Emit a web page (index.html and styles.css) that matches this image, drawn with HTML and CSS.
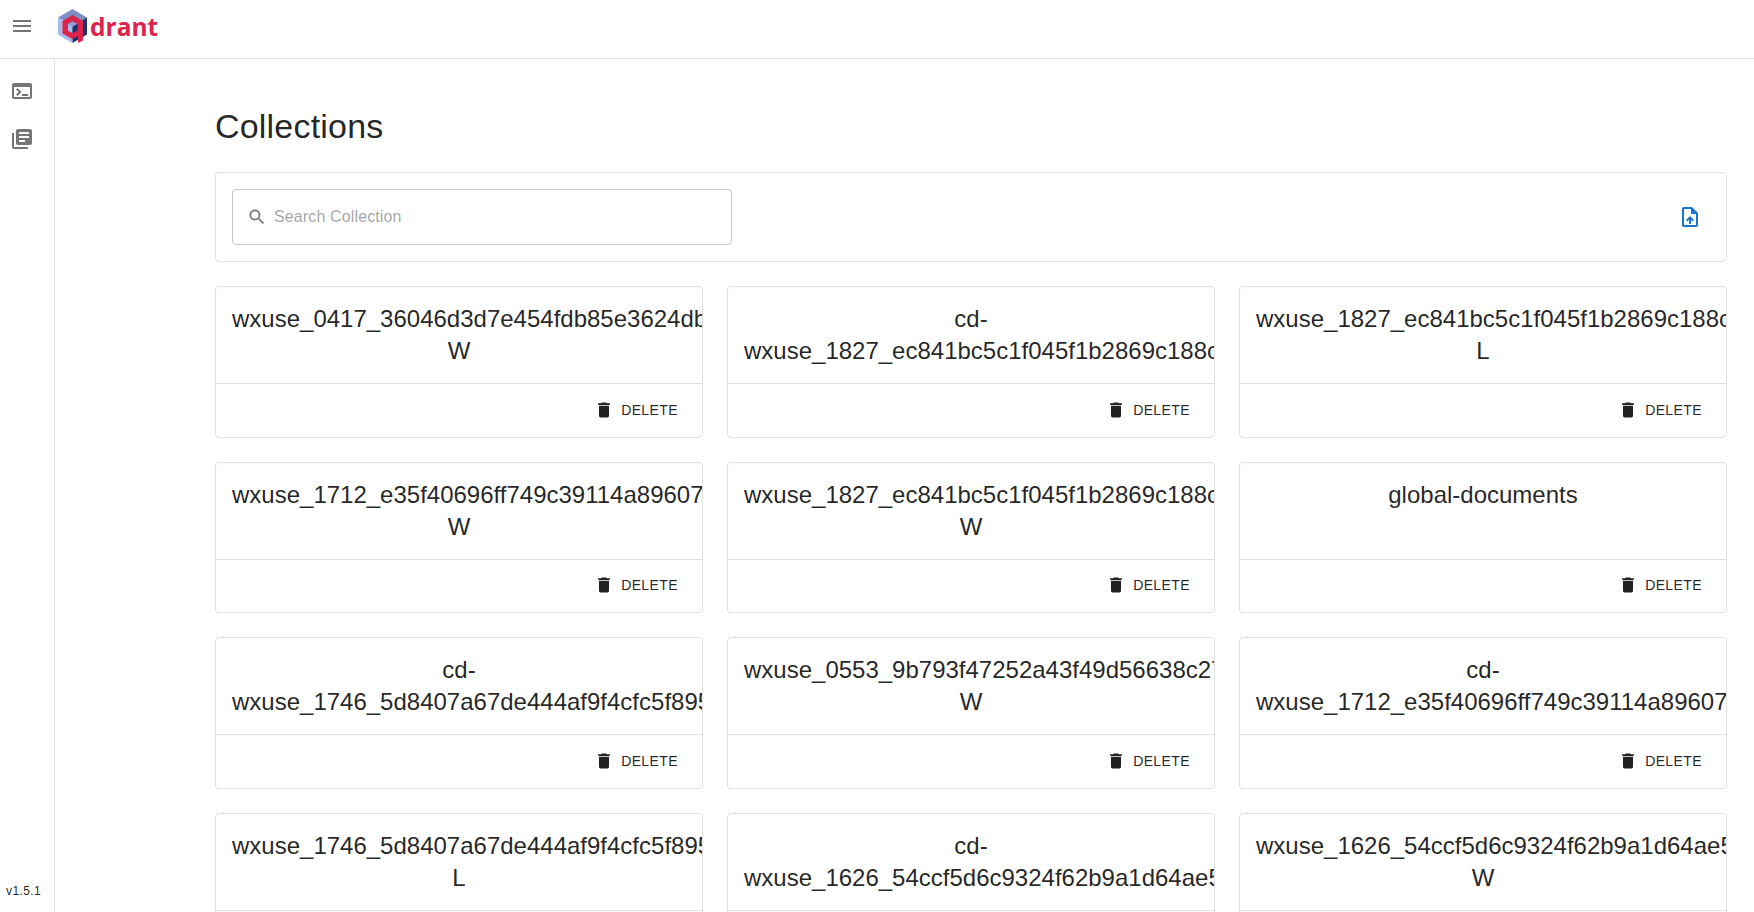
FILE: index.html
```html
<!DOCTYPE html>
<html lang="en">
<head>
<meta charset="utf-8">
<title>Qdrant Collections</title>
<link rel="stylesheet" href="styles.css">
</head>
<body>
<header class="topbar">
  <svg class="icon menu-icon" viewBox="0 0 24 24"><path d="M3 18h18v-2H3v2zm0-5h18v-2H3v2zm0-7v2h18V6H3z"/></svg>
  <div class="logo">
    <svg class="logo-mark" viewBox="0 0 29 34">
      <polygon points="14.5,0 29,8.5 14.5,17 0,8.5" fill="#7e8fc6"/>
      <polygon points="0,8.5 14.5,17 14.5,34 0,25.5" fill="#a9b9e6"/>
      <polygon points="29,8.5 29,25.5 14.5,34 14.5,17" fill="#1f3270"/>
      <path d="M14.5 6 L25 12 V31.5 L20 34 V27 L14.5 30 L4.5 24.5 V12 Z M14.5 12.5 L10 15 V21.5 L14.5 24 L19.5 21.5 V15 Z" fill="#dc244c" fill-rule="evenodd"/>
      <polygon points="14.5,12.5 19.5,15 14.5,18 10,15" fill="#8d9dd0"/>
      <polygon points="10,15 14.5,18 14.5,24 10,21.5" fill="#a9b9e6"/>
      <polygon points="19.5,15 19.5,21.5 14.5,24 14.5,18" fill="#1f3270"/>
    </svg>
    <span class="logo-text">drant</span>
  </div>
</header>
<div class="shell">
  <nav class="rail">
    <svg class="icon rail-icon" viewBox="0 0 24 24"><path d="M20 4H4c-1.11 0-2 .9-2 2v12c0 1.1.89 2 2 2h16c1.1 0 2-.9 2-2V6c0-1.1-.89-2-2-2zm0 14H4V8h16v10zm-2-1h-6v-2h6v2zM7.5 17l-1.41-1.41L8.67 13l-2.59-2.59L7.5 9l4 4-4 4z"/></svg>
    <svg class="icon rail-icon" viewBox="0 0 24 24"><path d="M4 6H2v14c0 1.1.9 2 2 2h14v-2H4V6zm16-4H8c-1.1 0-2 .9-2 2v12c0 1.1.9 2 2 2h12c1.1 0 2-.9 2-2V4c0-1.1-.9-2-2-2zm-1 9H9V9h10v2zm-4 4H9v-2h6v2zm4-8H9V5h10v2z"/></svg>
    <span class="version">v1.5.1</span>
  </nav>
  <main class="content">
    <h1 class="page-title">Collections</h1>
    <section class="toolbar">
      <label class="search">
        <svg class="search-icon" viewBox="0 0 24 24"><path d="M15.5 14h-.79l-.28-.27C15.41 12.59 16 11.11 16 9.5 16 5.91 13.09 3 9.5 3S3 5.91 3 9.5 5.91 16 9.5 16c1.61 0 3.09-.59 4.23-1.57l.27.28v.79l5 4.99L20.49 19l-4.99-5zm-6 0C7.01 14 5 11.99 5 9.5S7.01 5 9.5 5 14 7.01 14 9.5 11.99 14 9.5 14z"/></svg>
        <input class="search-input" type="text" placeholder="Search Collection">
      </label>
      <button class="upload" type="button" aria-label="Upload snapshot">
        <svg class="upload-icon" viewBox="0 0 24 24"><path d="M14 2H6c-1.1 0-1.99.9-1.99 2L4 20c0 1.1.89 2 1.99 2H18c1.1 0 2-.9 2-2V8l-6-6zm4 18H6V4h7v5h5v11zM8 15.01l1.41 1.41L11 14.84V19h2v-4.16l1.59 1.59L16 15.01 12.01 11 8 15.01z"/></svg>
      </button>
    </section>
    <section class="grid">
      <article class="card"><h2 class="card-title">wxuse_0417_36046d3d7e454fdb85e3624db8a1f0c2-W</h2><div class="card-actions"><button class="delete" type="button"><svg class="delete-icon" viewBox="0 0 24 24"><path d="M6 19c0 1.1.9 2 2 2h8c1.1 0 2-.9 2-2V7H6v12zM19 4h-3.5l-1-1h-5l-1 1H5v2h14V4z"/></svg>Delete</button></div></article>
      <article class="card"><h2 class="card-title">cd-wxuse_1827_ec841bc5c1f045f1b2869c188c0d3e7a</h2><div class="card-actions"><button class="delete" type="button"><svg class="delete-icon" viewBox="0 0 24 24"><path d="M6 19c0 1.1.9 2 2 2h8c1.1 0 2-.9 2-2V7H6v12zM19 4h-3.5l-1-1h-5l-1 1H5v2h14V4z"/></svg>Delete</button></div></article>
      <article class="card"><h2 class="card-title">wxuse_1827_ec841bc5c1f045f1b2869c188c0d3e7a-L</h2><div class="card-actions"><button class="delete" type="button"><svg class="delete-icon" viewBox="0 0 24 24"><path d="M6 19c0 1.1.9 2 2 2h8c1.1 0 2-.9 2-2V7H6v12zM19 4h-3.5l-1-1h-5l-1 1H5v2h14V4z"/></svg>Delete</button></div></article>
      <article class="card"><h2 class="card-title">wxuse_1712_e35f40696ff749c39114a896071b2d4c-W</h2><div class="card-actions"><button class="delete" type="button"><svg class="delete-icon" viewBox="0 0 24 24"><path d="M6 19c0 1.1.9 2 2 2h8c1.1 0 2-.9 2-2V7H6v12zM19 4h-3.5l-1-1h-5l-1 1H5v2h14V4z"/></svg>Delete</button></div></article>
      <article class="card"><h2 class="card-title">wxuse_1827_ec841bc5c1f045f1b2869c188c0d3e7a-W</h2><div class="card-actions"><button class="delete" type="button"><svg class="delete-icon" viewBox="0 0 24 24"><path d="M6 19c0 1.1.9 2 2 2h8c1.1 0 2-.9 2-2V7H6v12zM19 4h-3.5l-1-1h-5l-1 1H5v2h14V4z"/></svg>Delete</button></div></article>
      <article class="card"><h2 class="card-title">global-documents</h2><div class="card-actions"><button class="delete" type="button"><svg class="delete-icon" viewBox="0 0 24 24"><path d="M6 19c0 1.1.9 2 2 2h8c1.1 0 2-.9 2-2V7H6v12zM19 4h-3.5l-1-1h-5l-1 1H5v2h14V4z"/></svg>Delete</button></div></article>
      <article class="card"><h2 class="card-title">cd-wxuse_1746_5d8407a67de444af9f4cfc5f895e1a0b</h2><div class="card-actions"><button class="delete" type="button"><svg class="delete-icon" viewBox="0 0 24 24"><path d="M6 19c0 1.1.9 2 2 2h8c1.1 0 2-.9 2-2V7H6v12zM19 4h-3.5l-1-1h-5l-1 1H5v2h14V4z"/></svg>Delete</button></div></article>
      <article class="card"><h2 class="card-title">wxuse_0553_9b793f47252a43f49d56638c27a4e6d1-W</h2><div class="card-actions"><button class="delete" type="button"><svg class="delete-icon" viewBox="0 0 24 24"><path d="M6 19c0 1.1.9 2 2 2h8c1.1 0 2-.9 2-2V7H6v12zM19 4h-3.5l-1-1h-5l-1 1H5v2h14V4z"/></svg>Delete</button></div></article>
      <article class="card"><h2 class="card-title">cd-wxuse_1712_e35f40696ff749c39114a896071b2d4c</h2><div class="card-actions"><button class="delete" type="button"><svg class="delete-icon" viewBox="0 0 24 24"><path d="M6 19c0 1.1.9 2 2 2h8c1.1 0 2-.9 2-2V7H6v12zM19 4h-3.5l-1-1h-5l-1 1H5v2h14V4z"/></svg>Delete</button></div></article>
      <article class="card"><h2 class="card-title">wxuse_1746_5d8407a67de444af9f4cfc5f895e1a0b-L</h2><div class="card-actions"><button class="delete" type="button"><svg class="delete-icon" viewBox="0 0 24 24"><path d="M6 19c0 1.1.9 2 2 2h8c1.1 0 2-.9 2-2V7H6v12zM19 4h-3.5l-1-1h-5l-1 1H5v2h14V4z"/></svg>Delete</button></div></article>
      <article class="card"><h2 class="card-title">cd-wxuse_1626_54ccf5d6c9324f62b9a1d64ae57c8f09</h2><div class="card-actions"><button class="delete" type="button"><svg class="delete-icon" viewBox="0 0 24 24"><path d="M6 19c0 1.1.9 2 2 2h8c1.1 0 2-.9 2-2V7H6v12zM19 4h-3.5l-1-1h-5l-1 1H5v2h14V4z"/></svg>Delete</button></div></article>
      <article class="card"><h2 class="card-title">wxuse_1626_54ccf5d6c9324f62b9a1d64ae57c8f09-W</h2><div class="card-actions"><button class="delete" type="button"><svg class="delete-icon" viewBox="0 0 24 24"><path d="M6 19c0 1.1.9 2 2 2h8c1.1 0 2-.9 2-2V7H6v12zM19 4h-3.5l-1-1h-5l-1 1H5v2h14V4z"/></svg>Delete</button></div></article>
    </section>
  </main>
</div>
</body>
</html>
```
FILE: styles.css
```css
* { box-sizing: border-box; }

html, body {
  margin: 0;
  height: 100%;
  overflow: hidden;
  background: #fff;
  color: rgba(0, 0, 0, 0.87);
  font-family: "Liberation Sans", Arial, sans-serif;
}

.icon { display: block; width: 24px; height: 24px; fill: rgba(0, 0, 0, 0.54); flex: none; }

.topbar {
  display: flex;
  align-items: center;
  height: 59px;
  padding-left: 10px;
  padding-bottom: 6px;
  border-bottom: 1px solid #e0e0e0;
}

.logo { display: flex; align-items: center; margin-left: 24px; }
.logo-mark { display: block; width: 29px; height: 34px; }
.logo-text {
  margin-left: 3px;
  padding-top: 2px;
  font-family: "Open Sans", sans-serif;
  font-weight: 700;
  font-size: 24.5px;
  line-height: 32px;
  color: #dc244c;
}

.shell { display: flex; height: 853px; }

.rail {
  display: flex;
  flex-direction: column;
  align-items: flex-start;
  gap: 24px;
  width: 55px;
  flex: none;
  padding: 20px 0 15px 10px;
  border-right: 1px solid #e0e0e0;
}

.version {
  margin-top: auto;
  margin-left: -4px;
  font-size: 12px;
  line-height: 12px;
  letter-spacing: 0.4px;
}

.content { flex: 1; min-width: 0; padding: 46px 27px 0 160px; overflow: hidden; }

.page-title {
  margin: 0 0 25px;
  font-size: 34px;
  font-weight: 400;
  line-height: 42px;
  letter-spacing: 0.2px;
}

.toolbar {
  display: flex;
  align-items: center;
  justify-content: space-between;
  padding: 16px;
  border: 1px solid #e0e0e0;
  border-radius: 4px;
}

.search {
  display: flex;
  align-items: center;
  width: 500px;
  height: 56px;
  padding-left: 14px;
  border: 1px solid #c4c4c4;
  border-radius: 4px;
}

.search-icon { width: 20px; height: 20px; fill: rgba(0, 0, 0, 0.54); flex: none; }

.search-input {
  flex: 1;
  min-width: 0;
  margin-left: 7px;
  padding: 0;
  border: 0;
  outline: 0;
  background: transparent;
  font: 16px "Liberation Sans", Arial, sans-serif;
  letter-spacing: 0.13px;
}
.search-input::placeholder { color: rgba(0, 0, 0, 0.38); opacity: 1; }

.upload {
  display: flex;
  align-items: center;
  justify-content: center;
  width: 40px;
  height: 40px;
  padding: 0;
  border: 0;
  background: none;
}
.upload-icon { display: block; width: 24px; height: 24px; fill: #1976d2; }

.grid {
  display: grid;
  grid-template-columns: repeat(3, 1fr);
  gap: 24px;
  margin-top: 24px;
}

.card {
  display: flex;
  flex-direction: column;
  overflow: hidden;
  border: 1px solid #e0e0e0;
  border-radius: 4px;
}

.card-title {
  flex: 1;
  margin: 0;
  padding: 16px;
  font-size: 24px;
  font-weight: 400;
  line-height: 32px;
  text-align: center;
}

.card-actions {
  display: flex;
  justify-content: flex-end;
  padding: 7.5px 8px 9.17px;
  border-top: 1px solid #e0e0e0;
}

.delete {
  display: flex;
  align-items: center;
  height: 36px;
  padding: 0 16px 0 15px;
  border: 0;
  background: none;
  color: rgba(0, 0, 0, 0.87);
  font: 14px "Liberation Sans", Arial, sans-serif;
  letter-spacing: 0.4px;
  text-transform: uppercase;
}
.delete-icon { display: block; width: 20px; height: 20px; margin-right: 7px; fill: rgba(0, 0, 0, 0.87); }
```
